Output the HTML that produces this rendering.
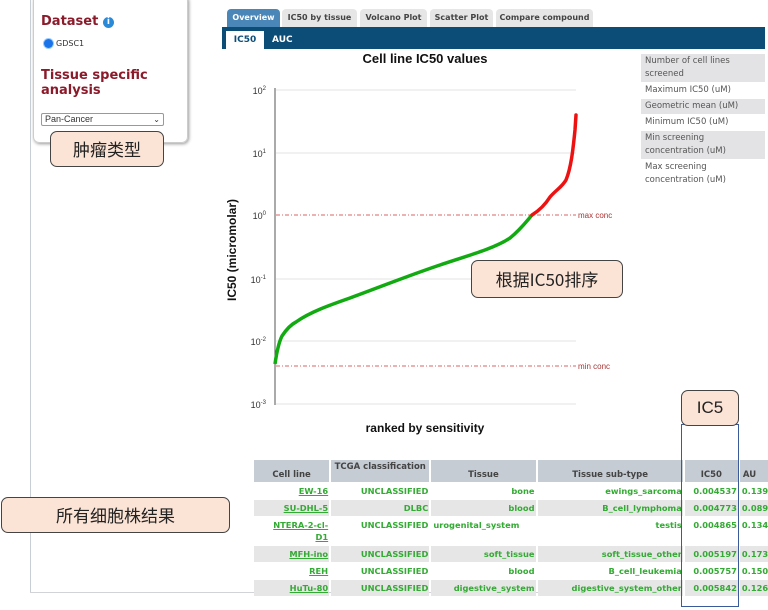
<!DOCTYPE html>
<html><head><meta charset="utf-8"><style>
*{margin:0;padding:0;box-sizing:border-box}
body{width:768px;height:610px;background:#fff;position:relative;overflow:hidden;font-family:"Liberation Sans","Noto Sans CJK SC",sans-serif}
.a{position:absolute}
.v{font-family:"DejaVu Sans",sans-serif}
.tab{position:absolute;top:9px;height:18px;background:#e6e6e6;border-radius:4px 4px 0 0;font:bold 8px "DejaVu Sans",sans-serif;color:#444;text-align:center;line-height:18px;white-space:nowrap;overflow:hidden}
.cb{position:absolute;background:#fbe3d5;border:1.5px solid #444;border-radius:7px;font-family:"Noto Sans CJK SC",sans-serif;color:#222;text-align:center}
.st div{padding:1px 4px;font:8.5px "DejaVu Sans",sans-serif;color:#555;line-height:13px;border-bottom:1px solid #fff}
.st .g{background:#e3e3e6}
table{border-collapse:separate;border-spacing:2px 1px;font:bold 8.3px "DejaVu Sans",sans-serif;color:#3a3;table-layout:fixed;width:530px}
td{padding:2px 1px 2px 2px;text-align:right;line-height:12px;vertical-align:top;white-space:nowrap;overflow:hidden}
td.w{white-space:normal}
th{background:#c5ccd3;color:#444;font-size:8.5px;padding:2px 3px;height:22px;vertical-align:bottom;text-align:center;white-space:nowrap;overflow:hidden}
tr.g td{background:#e6e6e6}
td u{color:#3a3}
</style></head><body>
<div class="a" style="left:30px;top:0;width:1px;height:592px;background:#c8ced6"></div>
<div class="a" style="left:30px;top:592px;width:650px;height:1px;background:#d0d4d8"></div>
<div class="a" style="left:33px;top:-5px;width:155px;height:148px;border:1px solid #ccc;border-radius:6px;box-shadow:1px 1px 3px #999"></div>
<div class="a v" style="left:41px;top:14px;font-weight:bold;font-size:13px;color:#8b1a2a">Dataset <span style="display:inline-block;width:11px;height:11px;border-radius:50%;background:#2a8ad8;color:#fff;font-size:9px;text-align:center;line-height:11px;vertical-align:1px">i</span></div>
<div class="a" style="left:44px;top:39px;width:9px;height:9px;border-radius:50%;background:#1a73e8;box-shadow:0 0 0 1px #9cf"></div>
<div class="a v" style="left:56px;top:39px;font-size:8px;color:#333">GDSC1</div>
<div class="a v" style="left:41px;top:68px;font-weight:bold;font-size:13px;line-height:15px;color:#8b1a2a">Tissue specific<br>analysis</div>
<div class="a" style="left:41px;top:113px;width:123px;height:13px;border:1px solid #999;border-radius:2px;font-size:9px;color:#333;line-height:11px;padding-left:3px">Pan-Cancer<span style="position:absolute;right:3px;top:0;font-size:8px">⌄</span></div>
<div class="cb" style="left:50px;top:131px;width:114px;height:36px;font-size:17px;line-height:33px">肿瘤类型</div>

<div class="tab" style="left:227px;width:53px;background:#4a86b8;color:#fff">Overview</div>
<div class="tab" style="left:282px;width:75px">IC50 by tissue</div>
<div class="tab" style="left:360px;width:67px">Volcano Plot</div>
<div class="tab" style="left:430px;width:63px">Scatter Plot</div>
<div class="tab" style="left:496px;width:97px">Compare compound</div>
<div class="a" style="left:222px;top:27px;width:543px;height:22px;background:#0c4d78"></div>
<div class="a" style="left:226px;top:31px;width:38px;height:18px;background:#fff;font:bold 9px 'DejaVu Sans';color:#0c4d78;text-align:center;line-height:18px">IC50</div>
<div class="a" style="left:272px;top:31px;font:bold 9px 'DejaVu Sans';color:#fff;line-height:18px">AUC</div>

<div class="a" style="left:300px;top:51px;width:250px;text-align:center;font-weight:bold;font-size:13px;color:#111">Cell line IC50 values</div>
<svg class="a" style="left:220px;top:80px" width="420" height="360" viewBox="220 80 420 360">
<g stroke="#e3e3e3" stroke-width="1"><line x1="276" y1="90" x2="576" y2="90"/><line x1="276" y1="153" x2="576" y2="153"/><line x1="276" y1="279" x2="576" y2="279"/><line x1="276" y1="341" x2="576" y2="341"/><line x1="276" y1="404" x2="576" y2="404"/></g>
<line x1="275" y1="88" x2="275" y2="405" stroke="#555" stroke-width="1"/>
<g stroke="#c33" stroke-width="0.8" stroke-dasharray="4 2 1 2"><line x1="276" y1="215" x2="576" y2="215"/><line x1="276" y1="366" x2="576" y2="366"/></g>
<g font-size="8" fill="#a33"><text x="578" y="218">max conc</text><text x="578" y="369">min conc</text></g>
<g font-size="9" fill="#333" text-anchor="end"><text x="266" y="94">10<tspan font-size="6" dy="-4">2</tspan></text><text x="266" y="157">10<tspan font-size="6" dy="-4">1</tspan></text><text x="266" y="219">10<tspan font-size="6" dy="-4">0</tspan></text><text x="266" y="283">10<tspan font-size="6" dy="-4">-1</tspan></text><text x="266" y="345">10<tspan font-size="6" dy="-4">-2</tspan></text><text x="266" y="408">10<tspan font-size="6" dy="-4">-3</tspan></text></g>
<path d="M275,364 C277,350 279,342 282,336 C286,330 290,325 296,322 C310,312 330,305 350,298 C380,287 410,275 440,265 C470,255 495,248 510,238 C520,230 526,222 532,215" fill="none" stroke="#1a1" stroke-width="3.5"/>
<path d="M532,215 C540,210 545,205 550,197 C556,190 562,187 566,180 C571,168 573,150 575,130 L576,115" fill="none" stroke="#e11" stroke-width="3.5" stroke-linecap="round"/>
<text transform="translate(236,250) rotate(-90)" font-size="12" font-weight="bold" text-anchor="middle" fill="#111">IC50 (micromolar)</text>
<text x="425" y="432" font-size="12" font-weight="bold" text-anchor="middle" fill="#111">ranked by sensitivity</text>
</svg>
<div class="cb" style="left:471px;top:260px;width:152px;height:38px;font-size:17px;line-height:35px">根据IC50排序</div>

<div class="a st" style="left:641px;top:54px;width:124px">
<div class="g">Number of cell lines screened</div><div>Maximum IC50 (uM)</div><div class="g">Geometric mean (uM)</div><div>Minimum IC50 (uM)</div><div class="g">Min screening concentration (uM)</div><div>Max screening concentration (uM)</div></div>

<div class="a" style="left:252px;top:459px;width:540px">
<table>
<colgroup><col style="width:75px"><col style="width:98px"><col style="width:104px"><col style="width:145px"><col style="width:53px"><col style="width:40px"></colgroup>
<tr><th>Cell line</th><th style="vertical-align:top">TCGA classification</th><th>Tissue</th><th>Tissue sub-type</th><th>IC50</th><th style="text-align:left">AU</th></tr>
<tr><td><u>EW-16</u></td><td>UNCLASSIFIED</td><td>bone</td><td>ewings_sarcoma</td><td>0.004537</td><td style="text-align:left">0.139</td></tr>
<tr class="g"><td><u>SU-DHL-5</u></td><td>DLBC</td><td>blood</td><td>B_cell_lymphoma</td><td>0.004773</td><td style="text-align:left">0.089</td></tr>
<tr><td class="w"><u>NTERA-2-cl-<br>D1</u></td><td>UNCLASSIFIED</td><td style="text-align:left">urogenital_system</td><td>testis</td><td>0.004865</td><td style="text-align:left">0.134</td></tr>
<tr class="g"><td><u>MFH-ino</u></td><td>UNCLASSIFIED</td><td>soft_tissue</td><td>soft_tissue_other</td><td>0.005197</td><td style="text-align:left">0.173</td></tr>
<tr><td><u>REH</u></td><td>UNCLASSIFIED</td><td>blood</td><td>B_cell_leukemia</td><td>0.005757</td><td style="text-align:left">0.150</td></tr>
<tr class="g"><td><u>HuTu-80</u></td><td>UNCLASSIFIED</td><td>digestive_system</td><td>digestive_system_other</td><td>0.005842</td><td style="text-align:left">0.126</td></tr>
</table></div>

<div class="a" style="left:681px;top:424px;width:58px;height:183px;border:1px solid #3b5a9a"></div>
<div class="cb" style="left:681px;top:390px;width:58px;height:36px;font-size:17px;line-height:33px;font-family:'Liberation Sans',sans-serif">IC5</div>
<div class="cb" style="left:1px;top:497px;width:229px;height:36px;font-size:17px;line-height:33px">所有细胞株结果</div>
</body></html>
